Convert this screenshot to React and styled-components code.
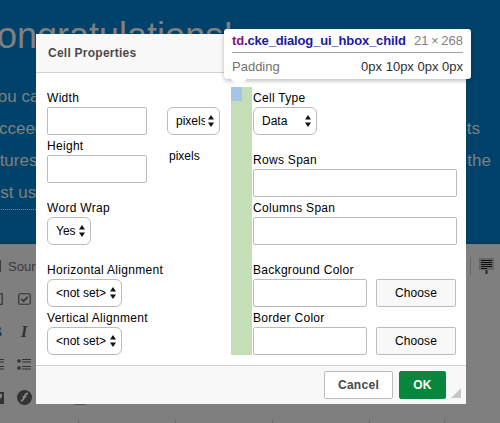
import styled, { createGlobalStyle } from "styled-components";

const GlobalStyle = createGlobalStyle`
    html, body {
        margin: 0;
        padding: 0;
        background: #7f7f7f;
    }
    body {
        font-family: "Liberation Sans", Arial, sans-serif;
    }
`;

/* Page behind the dialog ---------------------------*/
const Page = styled.div`
    position: relative;
    width: 500px;
    height: 423px;
    overflow: hidden;
    background: #7f7f7f;
`;

const Hero = styled.div`
    height: 243px;
    background: #00426a;
    border-bottom: 1px solid #003a5c;
    color: #808080;
`;

const Heading = styled.h1`
    margin: 0 0 0 -29px;
    padding-top: 14px;
    font-size: 36px;
    line-height: 44px;
    font-weight: 400;
    white-space: nowrap;
`;

const Lines = styled.div`
    margin-top: 23px;
    font-size: 17px;
    line-height: 32px;
`;

const Line = styled.div`
    display: flex;
    justify-content: space-between;
    white-space: nowrap;
    margin-left: ${(p) => p.$indent}px;
    margin-right: ${(p) => p.$tail || 0}px;
`;

const DottedLink = styled.span`
    border-bottom: 1px dotted #8a8a8a;
`;

const Toolbar = styled.div`
    color: #2f2f2f;
`;

const SourceRow = styled.div`
    display: flex;
    align-items: center;
    height: 32px;
    margin-top: 6px;
    padding-right: 6px;
`;

const Sep = styled.span`
    width: 1px;
    height: ${(p) => p.$h}px;
    background: ${(p) => p.$color};
    margin-right: ${(p) => p.$gap}px;
`;

const SourceLabel = styled.span`
    font-size: 13px;
    color: #3a3a3a;
    flex: 1;
`;

const IconRow = styled.div`
    display: grid;
    grid-template-columns: 27px 28px;
    margin-left: -17px;
    height: 33px;
    align-items: center;
    justify-items: center;
`;

const BoldGlyph = styled.span`
    font-family: "Liberation Serif", serif;
    font-weight: 700;
    font-size: 16px;
    line-height: 1;
    color: #333;
`;

const ItalicGlyph = styled.span`
    font-family: "Liberation Serif", serif;
    font-style: italic;
    font-weight: 700;
    font-size: 17px;
    line-height: 1;
    color: #333;
`;

const GridTicks = styled.div`
    position: absolute;
    left: 0;
    right: 0;
    bottom: 0;
    height: 3px;
    display: flex;
`;

const Tick = styled.span`
    position: absolute;
    left: ${(p) => p.$x}px;
    width: 1px;
    height: 3px;
    background: #666;
`;

const Dash = styled.span`
    position: absolute;
    left: 74px;
    top: 404px;
    width: 12px;
    height: 1px;
    background: #5a5a5a;
`;

/* Dialog ---------------------------*/
const Dialog = styled.div`
    position: absolute;
    left: 36px;
    top: 34px;
    width: 430px;
    height: 370px;
    background: #fff;
    display: flex;
    flex-direction: column;
`;

const DialogTitle = styled.div`
    height: 38px;
    flex: none;
    display: flex;
    align-items: center;
    padding-left: 12px;
    background: #f8f8f8;
    border-bottom: 1px solid #d1d1d1;
    font-size: 12px;
    font-weight: 700;
    letter-spacing: 0.25px;
    color: #4a4a4a;
`;

const DialogBody = styled.div`
    flex: 1;
    display: flex;
    padding-top: 14px;
    color: #000;
    font-size: 12px;
`;

const Column = styled.div`
    display: flex;
    flex-direction: column;
    gap: 14px;
    width: ${(p) => p.$w}px;
    padding-left: ${(p) => p.$pad}px;
    box-sizing: border-box;
`;

const Stack = styled.div`
    display: flex;
    flex-direction: column;
`;

const PairRow = styled.div`
    display: grid;
    grid-template-columns: 100px 53px;
    column-gap: 20px;
`;

const Label = styled.div`
    height: 20px;
    line-height: 22px;
    letter-spacing: 0.3px;
    white-space: nowrap;
`;

const TextInput = styled.input`
    display: block;
    box-sizing: border-box;
    width: ${(p) => p.$w}px;
    height: 28px;
    margin: 0;
    padding: 0 6px;
    background: #fff;
    border: 1px solid #bcbcbc;
    border-radius: 2px;
    outline: none;
`;

const SelectBox = styled.div`
    box-sizing: border-box;
    display: flex;
    align-items: center;
    width: ${(p) => p.$w}px;
    height: 28px;
    padding-left: 8px;
    background: #fff;
    border: 1px solid #bcbcbc;
    border-radius: 6px;
    white-space: nowrap;
`;

const SelectValue = styled.span`
    flex: 1;
    min-width: 0;
    overflow: hidden;
`;

const UpDown = styled.svg`
    flex: none;
    width: 6px;
    height: 12px;
    margin: 0 5px 0 3px;
`;

const UnitText = styled.div`
    margin: 14px 0 0 2px;
    line-height: 14px;
    height: 14px;
`;

/* devtools highlight on the hbox cell */
const HboxChild = styled.div`
    width: 21px;
    height: 268px;
    background: #c4deb6;
`;

const HboxContent = styled.div`
    width: 11px;
    height: 14px;
    background: #a2c5e8;
`;

const ColorRow = styled.div`
    display: flex;
    gap: 9px;
`;

const ChooseButton = styled.button`
    box-sizing: border-box;
    width: 80px;
    height: 28px;
    padding: 0;
    background: #f8f8f8;
    border: 1px solid #bcbcbc;
    border-radius: 2px;
    font-family: inherit;
    font-size: 12px;
    letter-spacing: 0.1px;
    color: #000;
`;

const DialogFooter = styled.div`
    position: relative;
    flex: none;
    height: 33px;
    display: flex;
    justify-content: flex-end;
    gap: 6px;
    padding: 5px 20px 0 0;
    background: #f8f8f8;
    border-top: 1px solid #d1d1d1;
`;

const FooterButton = styled.button`
    box-sizing: border-box;
    width: ${(p) => p.$w}px;
    height: 28px;
    padding: 0;
    border-radius: 2px;
    border: 1px solid ${(p) => (p.$primary ? "#09863e" : "#bcbcbc")};
    background: ${(p) => (p.$primary ? "#09863e" : "#fff")};
    color: ${(p) => (p.$primary ? "#fff" : "#484848")};
    font-family: inherit;
    font-size: 12px;
    font-weight: 700;
    letter-spacing: 0.3px;
`;

const Resizer = styled.svg`
    position: absolute;
    right: 5px;
    bottom: 6px;
    width: 10px;
    height: 10px;
`;

/* Inspector tooltip ---------------------------*/
const Tip = styled.div`
    position: absolute;
    left: 224px;
    top: 29px;
    width: 247px;
    height: 50px;
    box-sizing: border-box;
    padding: 0 8px;
    background: #fff;
    border-radius: 3px;
    box-shadow: 0 2px 4px rgba(0, 0, 0, 0.25);
    font-size: 13px;
`;

const TipArrow = styled.span`
    position: absolute;
    left: 7px;
    bottom: -8px;
    width: 0;
    height: 0;
    border-left: 8px solid transparent;
    border-right: 8px solid transparent;
    border-top: 8px solid #fff;
`;

const TipHead = styled.div`
    display: flex;
    justify-content: space-between;
    align-items: center;
    height: 23px;
    border-bottom: 1px solid #a0a0a0;
    white-space: nowrap;
`;

const TipSelector = styled.span`
    font-size: 13px;
    font-weight: 700;
    letter-spacing: -0.15px;
    color: #1a1aa6;
`;

const TipTag = styled.span`
    color: #881280;
`;

const TipSize = styled.span`
    color: #808080;
    font-size: 13px;
`;

const TipBody = styled.div`
    display: flex;
    justify-content: space-between;
    align-items: center;
    height: 26px;
`;

const TipKey = styled.span`
    color: #737373;
`;

const TipValue = styled.span`
    color: #303030;
    font-size: 13px;
`;

/* Small drawings ---------------------------*/
const Arrows = () => (
    <UpDown viewBox="0 0 6 12">
        <path d="M3 0 6 4.6H0zM3 12 0 7.4h6z" fill="#111" />
    </UpDown>
);

const Select = ({ w, value }) => (
    <SelectBox $w={w}>
        <SelectValue>{value}</SelectValue>
        <Arrows />
    </SelectBox>
);

const Field = ({ label, children }) => (
    <Stack>
        <Label>{label}</Label>
        {children}
    </Stack>
);

const CheckIcon = () => (
    <svg width="13" height="12" viewBox="0 0 13 12" fill="none" stroke="#333">
        <rect x="0.75" y="0.75" width="11.5" height="10.5" rx="1.5" strokeWidth="1.2" />
        <path d="M3.3 5.9 5.6 8.3 9.8 3.7" strokeWidth="1.7" />
    </svg>
);

const FormIcon = () => (
    <svg width="13" height="12" viewBox="0 0 13 12" fill="none" stroke="#333">
        <rect x="0.75" y="0.75" width="11.5" height="10.5" strokeWidth="1.2" />
        <path d="M3 3.500h7M3 6h7M3 8.500h7" strokeWidth="1" />
    </svg>
);

const BulletIcon = () => (
    <svg width="14" height="13" viewBox="0 0 14 13" fill="#333">
        <circle cx="2" cy="3" r="1.8" />
        <circle cx="2" cy="10" r="1.8" />
        <path d="M5 1h9v1H5zM5 3.500h9v1H5zM5 8h9v1H5zM5 10.500h9v1H5z" />
    </svg>
);

const NumberIcon = () => (
    <svg width="14" height="13" viewBox="0 0 14 13" fill="#333">
        <path d="M5 1h9v1H5zM5 3.500h9v1H5zM5 8h9v1H5zM5 10.500h9v1H5z" />
    </svg>
);

const ImageIcon = () => (
    <svg width="14" height="14" viewBox="0 0 14 14" fill="#333">
        <path d="M0 1h14v12H0zM2 3v7l4-3 3 2 3-3V3z" fillRule="evenodd" />
    </svg>
);

const FlashIcon = () => (
    <svg width="15" height="15" viewBox="0 0 15 15">
        <circle cx="7.5" cy="7.500" r="7.500" fill="#333" />
        <path d="M11 3.300C8.500 3.300 8 5 7.300 7 6.700 9 6 10.800 3.800 11" fill="none" stroke="#8a8a8a" strokeWidth="1.700" />
        <path d="M5.500 6.700h4" stroke="#8a8a8a" strokeWidth="1.500" />
    </svg>
);

const DocIcon = () => (
    <svg width="15" height="16" viewBox="0 0 15 16">
        <rect width="15" height="12" fill="#666" />
        <path d="M2 2h11v1H2zM2 4h11v1H2zM2 6h11v1H2zM2 8h11v1H2zM2 10h6v1H2z" fill="#111" />
        <path d="M6 12.500h3v.8H8v1.500h1v.8H6v-.8h1v-1.500H6z" fill="#111" />
    </svg>
);

const App = () => {
    return (
        <Page>
            <GlobalStyle />
            <Hero>
                <Heading>Congratulations!</Heading>
                <Lines>
                    <Line $indent={-12}>
                        <span>You can now</span>
                    </Line>
                    <Line $indent={-19} $tail={20}>
                        <span>succeed</span>
                        <span>ts</span>
                    </Line>
                    <Line $indent={-24} $tail={9}>
                        <span>features</span>
                        <span>the</span>
                    </Line>
                    <Line $indent={-13}>
                        <DottedLink>just us</DottedLink>
                    </Line>
                </Lines>
            </Hero>
            <Toolbar>
                <SourceRow>
                    <Sep $h={12} $gap={7} $color="#3f3f3f" />
                    <SourceLabel>Source</SourceLabel>
                    <Sep $h={18} $gap={8} $color="#666" />
                    <DocIcon />
                </SourceRow>
                <IconRow>
                    <FormIcon />
                    <CheckIcon />
                </IconRow>
                <IconRow>
                    <BoldGlyph>B</BoldGlyph>
                    <ItalicGlyph>I</ItalicGlyph>
                </IconRow>
                <IconRow>
                    <NumberIcon />
                    <BulletIcon />
                </IconRow>
                <IconRow>
                    <ImageIcon />
                    <FlashIcon />
                </IconRow>
            </Toolbar>
            <Dash />
            <GridTicks>
                <Tick $x={78} />
                <Tick $x={175} />
                <Tick $x={272} />
                <Tick $x={369} />
                <Tick $x={444} />
            </GridTicks>

            <Dialog>
                <DialogTitle>Cell Properties</DialogTitle>
                <DialogBody>
                    <Column $w={195} $pad={11}>
                        <Stack>
                            <PairRow>
                                <Field label="Width">
                                    <TextInput $w={100} />
                                </Field>
                                <Field label=" ">
                                    <Select w={53} value="pixels" />
                                </Field>
                            </PairRow>
                            <PairRow>
                                <Field label="Height">
                                    <TextInput $w={100} />
                                </Field>
                                <UnitText>pixels</UnitText>
                            </PairRow>
                        </Stack>
                        <Field label="Word Wrap">
                            <Select w={44} value="Yes" />
                        </Field>
                        <Stack>
                            <Field label="Horizontal Alignment">
                                <Select w={75} value="<not set>" />
                            </Field>
                            <Field label="Vertical Alignment">
                                <Select w={75} value="<not set>" />
                            </Field>
                        </Stack>
                    </Column>
                    <HboxChild>
                        <HboxContent />
                    </HboxChild>
                    <Column $w={214} $pad={1}>
                        <Field label="Cell Type">
                            <Select w={64} value="Data" />
                        </Field>
                        <Stack>
                            <Field label="Rows Span">
                                <TextInput $w={204} />
                            </Field>
                            <Field label="Columns Span">
                                <TextInput $w={204} />
                            </Field>
                        </Stack>
                        <Stack>
                            <Field label="Background Color">
                                <ColorRow>
                                    <TextInput $w={114} />
                                    <ChooseButton>Choose</ChooseButton>
                                </ColorRow>
                            </Field>
                            <Field label="Border Color">
                                <ColorRow>
                                    <TextInput $w={114} />
                                    <ChooseButton>Choose</ChooseButton>
                                </ColorRow>
                            </Field>
                        </Stack>
                    </Column>
                </DialogBody>
                <DialogFooter>
                    <FooterButton $w={69}>Cancel</FooterButton>
                    <FooterButton $w={47} $primary>
                        OK
                    </FooterButton>
                    <Resizer viewBox="0 0 10 10">
                        <path d="M10 0V10H0z" fill="#c8c8c8" />
                    </Resizer>
                </DialogFooter>
            </Dialog>

            <Tip>
                <TipHead>
                    <TipSelector>
                        <TipTag>td</TipTag>.cke_dialog_ui_hbox_child
                    </TipSelector>
                    <TipSize>21{"\u2009×\u2009"}268</TipSize>
                </TipHead>
                <TipBody>
                    <TipKey>Padding</TipKey>
                    <TipValue>0px 10px 0px 0px</TipValue>
                </TipBody>
                <TipArrow />
            </Tip>
        </Page>
    );
};

export default App;
